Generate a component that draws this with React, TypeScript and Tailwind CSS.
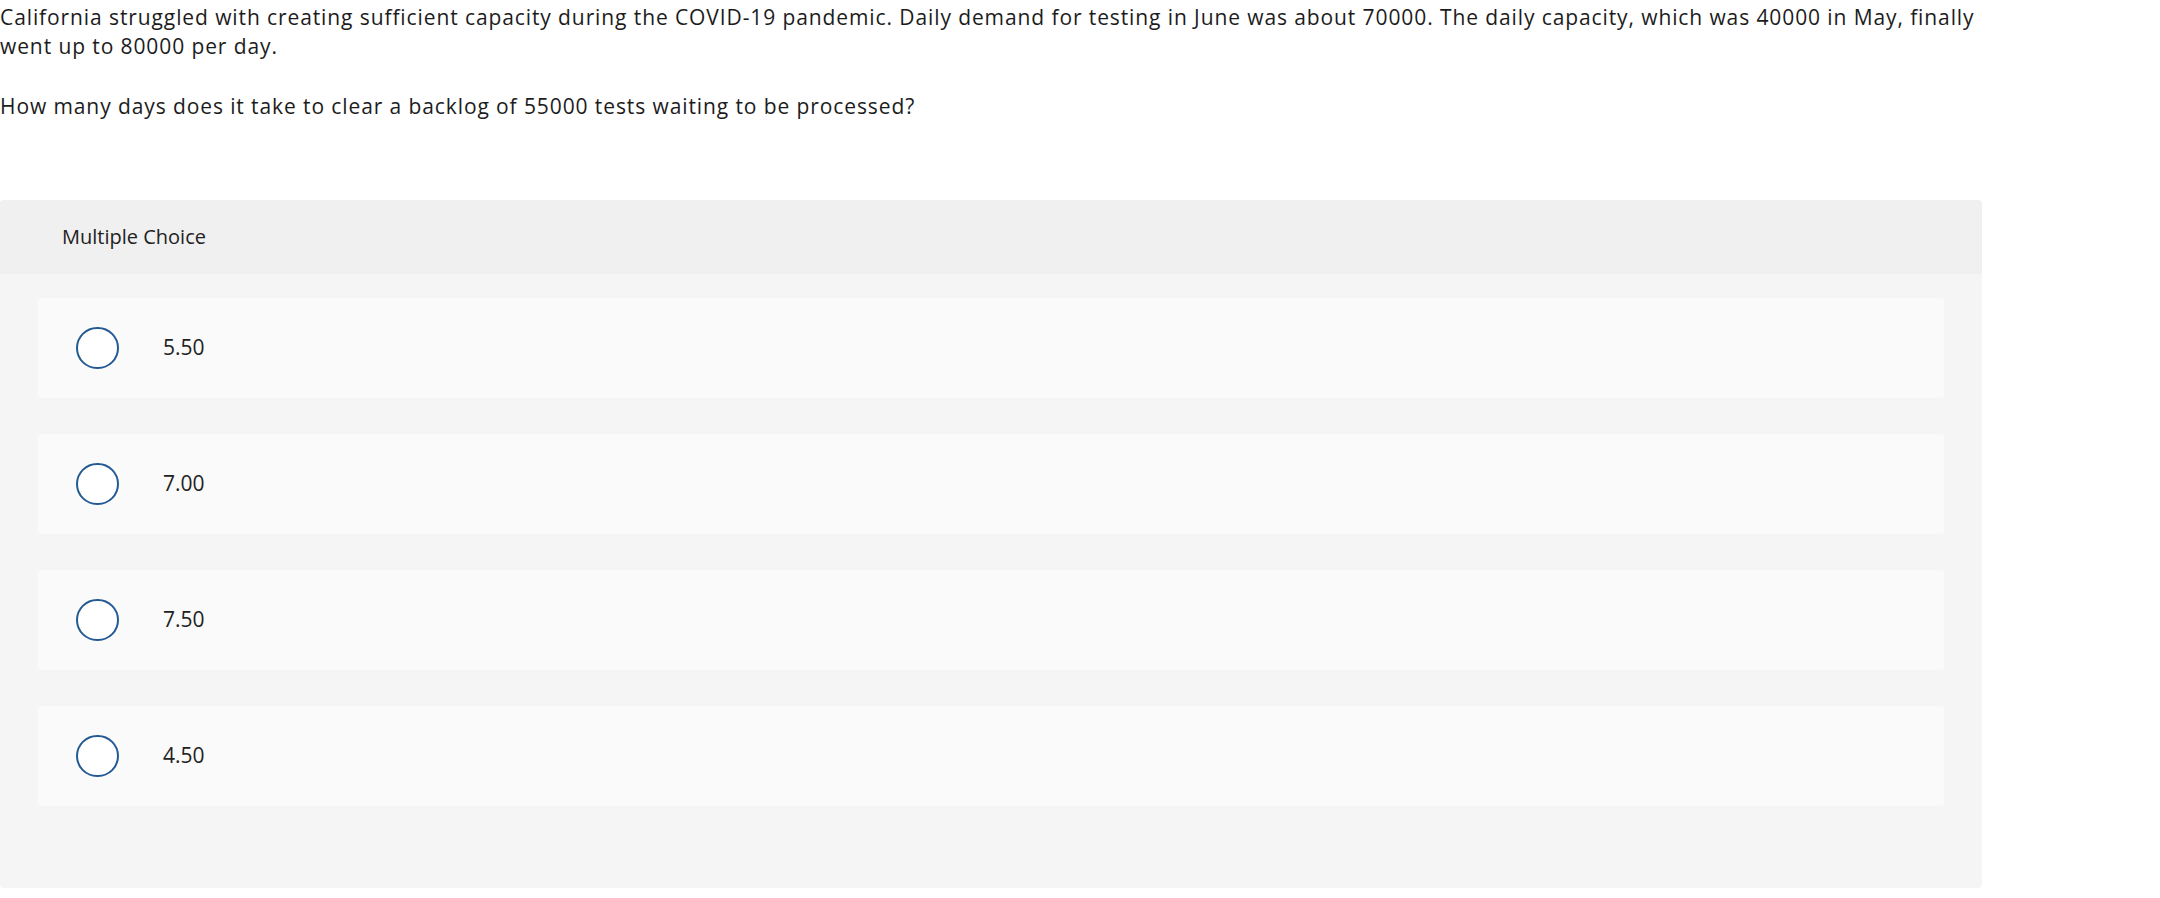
import React from "react";

const options = ["5.50", "7.00", "7.50", "4.50"];

export default function App() {
  return (
    <div className="w-[2160px] h-[898px] bg-white text-[#1c1c1c]" style={{ fontFamily: "'Open Sans', Lato, sans-serif" }}>
      <div className="w-[1982px] pt-[3px]">
        <p className="text-[21px] leading-[29px] tracking-[0.9px]">
          California struggled with creating sufficient capacity during the COVID-19 pandemic. Daily demand for testing in June was about 70000. The daily capacity, which was 40000 in May, finally went up to 80000 per day.
        </p>
        <p className="text-[21px] leading-[29px] tracking-[0.9px] mt-[31px]">
          How many days does it take to clear a backlog of 55000 tests waiting to be processed?
        </p>
        <div className="mt-[79px] bg-[#f5f5f5] rounded-[4px] overflow-hidden h-[688px]">
          <div className="h-[74px] bg-[#f0f0f0] flex items-center pl-[62px] text-[20px] text-[#222]">
            Multiple Choice
          </div>
          <div className="flex flex-col gap-[36px] pt-[24px] px-[38px]">
            {options.map((o) => (
              <div key={o} className="h-[100px] bg-[#fafafa] rounded-[4px] flex items-center pl-[38px]">
                <div className="w-[43px] h-[42px] rounded-full border-2 border-[#245a92] bg-white" />
                <span className="ml-[44px] text-[21px] text-[#222]">{o}</span>
              </div>
            ))}
          </div>
        </div>
      </div>
    </div>
  );
}
